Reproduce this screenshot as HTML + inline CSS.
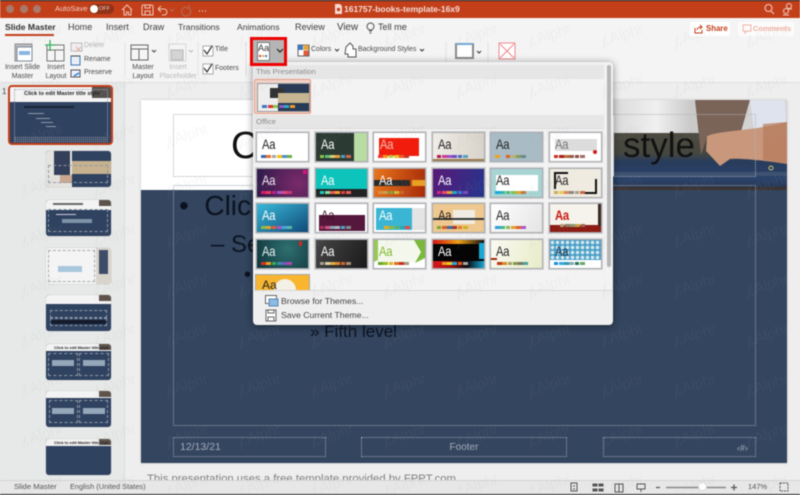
<!DOCTYPE html>
<html><head><meta charset="utf-8"><style>
html,body{margin:0;padding:0;width:800px;height:495px;overflow:hidden;background:#eee}
#r{position:relative;width:800px;height:495px;overflow:hidden;font-family:"Liberation Sans",sans-serif;filter:blur(.45px);background:#ebebeb}
#r div,#r span.a{position:absolute}
.tx{position:absolute;white-space:nowrap;color:#4a4a4a;font-size:7px;line-height:10px}
.c{text-align:center;white-space:normal}
.tab{position:absolute;top:21px;font-size:9.100px;line-height:13px;color:#3c3c3c;white-space:nowrap}
.th{position:absolute;width:51px;height:28px;border:1px solid #a4a8ad;box-shadow:0 0 0 1px #d6d6d6;overflow:hidden}
.th b{position:absolute;left:5px;top:3px;font:400 14px/16px "Liberation Sans",sans-serif;color:#222;transform:scaleX(.8);transform-origin:left top;letter-spacing:-.2px}
.th p{position:absolute;left:4px;top:22px;margin:0;height:3px;display:flex;gap:.5px}
.th p i{display:block;width:4.800px;height:3px}
.th div{position:absolute}
.st{position:absolute;left:46px;width:65px;height:36px;background:#2f4260;border-radius:3px;overflow:hidden;box-shadow:0 0 1px #999}
.st .w{left:0;top:0;width:100%;height:10px;background:#f3f3f3}
.st .p{right:0;top:0;width:12px;height:6px;background:#5d534c}
.st .l{border:1px dashed #8f98a6;box-sizing:border-box}
.dash{position:absolute;border:1px dotted #9da4af;box-sizing:border-box}
</style></head><body><div id="r">

<!-- title bar -->
<div style="left:0;top:0;width:800px;height:1px;background:#111"></div>
<div style="left:0;top:1px;width:800px;height:17px;background:#c33f1a"></div>
<div style="left:6px;top:5px;width:8px;height:8px;border-radius:50%;background:#a9796a"></div>
<div style="left:20px;top:5px;width:8px;height:8px;border-radius:50%;background:#a9796a"></div>
<div style="left:33px;top:5px;width:8px;height:8px;border-radius:50%;background:#a9796a"></div>
<span class="tx" style="left:55px;top:4px;font-size:7.500px;color:#f0cfc5">AutoSave</span>
<div style="left:89px;top:4px;width:25px;height:10px;border-radius:5px;background:#8e3218"></div>
<div style="left:90px;top:5px;width:8px;height:8px;border-radius:50%;background:#fff"></div>
<span class="tx" style="left:99px;top:5px;font-size:5.500px;line-height:8px;color:#eeccc2">OFF</span>
<svg style="position:absolute;left:120px;top:2px" width="100" height="16" fill="none" stroke="#eec6ba" stroke-width="1">
<path d="M2 8l5-5 5 5M4 7v6h2.500v-3h2v3h2.500V7"/>
<path d="M23 3h9l1 1v9H22V4zM25 3v3h5V3M25 13V9h5v4"/>
<path d="M38 7h6a3 3 0 0 1 0 6h-2M38 7l3-3M38 7l3 3"/><path d="M50 7l2 2 2-2" stroke="#b36f5c"/>
<path d="M66 5a4.500 4.500 0 1 0 3 1M69 3v3h-3" stroke="#b36f5c"/>
<path d="M79 9h1M82 9h1M85 9h1" stroke="#eec6ba" stroke-width="1.400"/></svg>
<svg style="position:absolute;left:334px;top:3px" width="9" height="12"><path d="M1 1h5l2 2v8H1z" fill="#f3d9d1"/><path d="M3 5h3v3H3z" fill="#c33f1a"/></svg>
<span class="tx" style="left:344px;top:4px;font-size:8.500px;font-weight:700;color:#f3ded8">161757-books-template-16x9</span>
<svg style="position:absolute;left:763px;top:2px" width="32" height="15" fill="none" stroke="#eec6ba" stroke-width="1.100"><circle cx="5.500" cy="6" r="3.500"/><path d="M8 9l3 3"/><circle cx="26" cy="4" r="2.500"/><circle cx="23" cy="9" r="2.500"/><path d="M20 13h6M25 7h4"/></svg>

<!-- tabs -->
<div style="left:0;top:18px;width:800px;height:64px;background:#f4f4f4"></div>
<span class="tab" style="left:5px;font-weight:700;font-size:8.600px;color:#333">Slide Master</span>
<div style="left:5px;top:34px;width:49px;height:1.500px;background:#c33f1a"></div>
<span class="tab" style="left:68px">Home</span>
<span class="tab" style="left:106px">Insert</span>
<span class="tab" style="left:143px">Draw</span>
<span class="tab" style="left:178px;font-size:8.600px">Transitions</span>
<span class="tab" style="left:237px;font-size:8.600px">Animations</span>
<span class="tab" style="left:295px">Review</span>
<span class="tab" style="left:337px;font-size:9.800px">View</span>
<svg style="position:absolute;left:366px;top:22px" width="9" height="12" fill="none" stroke="#555"><circle cx="4.500" cy="4.500" r="3.500"/><path d="M3 9h3M3.500 11h2"/></svg>
<span class="tab" style="left:378px">Tell me</span>

<div style="left:690px;top:22px;width:40px;height:14px;background:#fff;border-radius:2px"></div>
<svg style="position:absolute;left:694px;top:24px" width="10" height="10" fill="none" stroke="#c33f1a"><path d="M1 4v5h7V6M3 6c0-2 2-3 4-3M6 1l2 2-2 2"/></svg>
<span class="tx" style="left:706px;top:24px;font-size:7.800px;font-weight:700;color:#c33f1a">Share</span>
<div style="left:738px;top:22px;width:56px;height:14px;background:#fbfbfb;border-radius:2px"></div>
<svg style="position:absolute;left:742px;top:24px" width="10" height="10" fill="none" stroke="#efb4a3"><path d="M1 1h8v6H5L3 9V7H1z"/></svg>
<span class="tx" style="left:753px;top:24px;font-size:7.400px;font-weight:700;color:#eeb09f">Comments</span>

<!-- ribbon icons -->
<svg style="position:absolute;left:0;top:38px" width="800" height="44" fill="none">
<rect x="15" y="6" width="17" height="17" fill="#bdbdbd" stroke="#8f8f8f"/><rect x="17" y="9" width="15" height="14" fill="#fff" stroke="#7a8a9a"/><rect x="19" y="13" width="11" height="4" fill="#88b6e0"/>
<rect x="47" y="7" width="17" height="16" fill="#f5f5f5" stroke="#777"/><path d="M47 12h17M55 12v11" stroke="#777"/><path d="M50 2v11M45 7h11" stroke="#35b05c" stroke-width="1.300"/>
<rect x="71" y="5" width="11" height="8" stroke="#bbb" fill="#eee"/><path d="M76 9l5 5M81 9l-5 5" stroke="#e8b0a4"/>
<rect x="71" y="18" width="9" height="9" stroke="#3c78b4" fill="#e8eef5"/><path d="M71 18h9" stroke="#444"/>
<rect x="71" y="32" width="9" height="7" stroke="#555" fill="#eef"/><path d="M74 38l5-3" stroke="#2a7fd0" stroke-width="1.500"/>
<rect x="131" y="7" width="17" height="15" fill="#f5f5f5" stroke="#666"/><path d="M131 11h17M139 11v11" stroke="#666"/><path d="M152 12l2 2 2-2" stroke="#444"/>
<rect x="169" y="6" width="17" height="17" stroke="#bbb" stroke-dasharray="1 1"/><rect x="171" y="12" width="12" height="10" fill="#d4d4d4" stroke="#b5b5b5"/><path d="M189 12l2 2 2-2" stroke="#bbb"/>
<rect x="203" y="8" width="10" height="10" fill="#fff" stroke="#aaa"/><path d="M204 12l3 4 5-8" stroke="#333" stroke-width="1.200"/>
<rect x="203" y="26" width="10" height="10" fill="#fff" stroke="#aaa"/><path d="M204 30l3 4 5-8" stroke="#333" stroke-width="1.200"/>
<path d="M246 4v34" stroke="#dcdcdc"/><path d="M125 4v34M198 4v34M446 4v24M488 4v24" stroke="#e1e1e1"/>
<rect x="298" y="7" width="11" height="11" fill="#fff" stroke="#666"/><rect x="298" y="7" width="5" height="5" fill="#3a78c4"/><rect x="303.500" y="7" width="5" height="5" fill="#e8a33c"/><rect x="303.500" y="12.500" width="5" height="5" fill="#e15a3a"/>
<path d="M335 11l2 2 2-2M420 11l2 2 2-2M477 13l2 2 2-2" stroke="#333"/>
<path d="M346 9l4-4 3 3v3h3v8h-8v-3h-3z" stroke="#555" fill="#fff"/>
<rect x="456" y="6" width="17" height="14" fill="#fff" stroke="#8a8a8a" stroke-width="2"/><path d="M456 6h17" stroke="#6fb0e5" stroke-width="1.500"/>
<rect x="499" y="5" width="16" height="16" fill="#fff" stroke="#ec8b8f"/><path d="M500 6l14 14M514 6l-14 14" stroke="#ec8b8f"/>
</svg>
<span class="tx c" style="left:2px;top:64px;width:41px;height:20px;line-height:8.500px">Insert Slide<br>Master</span>
<span class="tx c" style="left:44px;top:64px;width:24px;line-height:8.500px">Insert<br>Layout</span>
<span class="tx" style="left:84px;top:41px;color:#b4b4b4">Delete</span>
<span class="tx" style="left:84px;top:55px">Rename</span>
<span class="tx" style="left:84px;top:68px">Preserve</span>
<span class="tx c" style="left:128px;top:64px;width:30px;line-height:8.500px">Master<br>Layout</span>
<span class="tx c" style="left:158px;top:64px;width:40px;line-height:8.500px;color:#b8b8b8">Insert<br>Placeholder</span>
<span class="tx" style="left:215px;top:45px">Title</span>
<span class="tx" style="left:215px;top:64px">Footers</span>
<span class="tx" style="left:311px;top:45px">Colors</span>
<span class="tx" style="left:358px;top:45px">Background Styles</span>

<!-- left panel -->
<div style="left:0;top:82px;width:124px;height:398px;background:#e7e9e8;border-top:1px solid #ddd"></div>
<div style="left:124px;top:82px;width:676px;height:398px;background:#eeeeee;border-top:1px solid #dedede;border-left:1px solid #dcdcdc"></div>
<span class="tx" style="left:2px;top:87px;font-size:8px;color:#444">1</span>
<div style="left:8px;top:85px;width:105px;height:60px;border:2px solid #c33f1a;border-radius:4px;box-sizing:border-box;background:#2f4260;overflow:hidden">
  <div style="left:0;top:0;width:100%;height:15px;background:#f4f4f4"></div>
  <div style="left:82px;top:0;width:19px;height:11px;background:#55504e"></div>
  <span class="tx c" style="left:4px;top:4px;width:96px;font-size:5.500px;line-height:7px;font-weight:700;color:#222">Click to edit Master title style</span>
  <div class="dash" style="left:4px;top:2px;width:94px;height:51px"></div>
  <div style="left:14px;top:19px;width:50px;height:1.500px;background:#1a2436"></div>
  <div style="left:18px;top:26px;width:16px;height:1px;background:#8c99ab"></div>
  <div style="left:26px;top:31px;width:14px;height:1px;background:#8c99ab"></div>
  <div style="left:31px;top:35px;width:12px;height:1px;background:#8c99ab"></div>
  <div style="left:36px;top:39px;width:10px;height:1px;background:#8c99ab"></div>
  <div class="dash" style="left:4px;top:50px;width:94px;height:5px"></div>
</div>

<div class="st" style="top:151px;background:#2f4260"><div style="left:0;top:0;width:26px;height:36px;background:#e5e3de"></div><div style="left:8px;top:0;width:16px;height:24px;background:#34405a"></div><div style="left:14px;top:24px;width:12px;height:8px;background:#c9a88f"></div><div style="left:26px;top:10px;width:39px;height:13px;background:#c6b28e"></div><div class="l" style="left:2px;top:14px;width:60px;height:18px"></div></div>
<div class="st" style="top:200px"><div class="w"></div><div class="p"></div><div style="left:7px;top:3px;width:30px;height:2px;background:#666"></div><div class="l" style="left:2px;top:9px;width:60px;height:23px"></div><div style="left:10px;top:14px;width:20px;height:1px;background:#ccd"></div><div style="left:16px;top:19px;width:30px;height:4px;background:#7e93a8"></div></div>
<div class="st" style="top:248px;background:#f4f4f4"><div style="right:0;top:0;width:15px;height:36px;background:#d8d4cc"></div><div style="right:3px;top:2px;width:9px;height:24px;background:#3d4d68"></div><div class="l" style="left:2px;top:2px;width:47px;height:32px;border-color:#aaa"></div><div style="left:12px;top:18px;width:24px;height:6px;background:#a8c6dc"></div></div>
<div class="st" style="top:295px"><div class="w" style="height:9px"></div><div class="p"></div><div class="l" style="left:4px;top:15px;width:57px;height:8px"></div><div style="left:5px;top:25px;width:55px;height:4px;background:#141c2b"></div><div class="l" style="left:4px;top:23px;width:57px;height:8px"></div></div>
<div class="st" style="top:344px"><div class="w" style="height:7px"></div><div class="p"></div><div class="tx" style="left:8px;top:1px;font-size:4px;line-height:5px;color:#222;font-weight:700">Click to edit Master title style</div><div class="l" style="left:2px;top:9px;width:30px;height:23px"></div><div class="l" style="left:33px;top:9px;width:30px;height:23px"></div><div style="left:6px;top:16px;width:22px;height:6px;background:#94a8ba"></div><div style="left:37px;top:16px;width:22px;height:6px;background:#94a8ba"></div></div>
<div class="st" style="top:391px"><div class="w" style="height:7px"></div><div class="p"></div><div class="l" style="left:3px;top:9px;width:29px;height:23px"></div><div class="l" style="left:33px;top:9px;width:29px;height:23px"></div><div style="left:6px;top:17px;width:22px;height:6px;background:#94a8ba"></div><div style="left:37px;top:17px;width:22px;height:6px;background:#94a8ba"></div></div>
<div class="st" style="top:439px"><div class="w" style="height:7px"></div><div class="p"></div><div class="tx" style="left:8px;top:1px;font-size:4px;line-height:5px;color:#222;font-weight:700">Click to edit Master title style</div></div>

<!-- main slide -->
<div style="left:141px;top:100px;width:646px;height:363px;background:#fff;box-shadow:0 0 2px #bbb;overflow:hidden">
  <div style="left:0;top:90px;width:646px;height:273px;background:#33455f"></div>
  <!-- photo -->
  <div style="left:472px;top:0;width:174px;height:36px;background:linear-gradient(90deg,#d9d9d9,#f0f0f0 25%,#c9c9c9 45%,#d8d8d8)"></div>
  <div style="left:472px;top:33px;width:174px;height:57px;background:linear-gradient(180deg,#4c4a40 0,#46473f 35%,#283c5c 50%,#2b426a 80%,#26364e)"></div>
  <svg style="position:absolute;left:472px;top:0" width="174" height="90"><path d="M82 0h55l-9 32-33 3-7 20z" fill="#7a6357"/><path d="M128 32l9-32 36 0 1 24z" fill="#d2d2d2"/><path d="M137 0h35l1 22-32 8z" fill="#dfe3ee"/><path d="M94 36c15-6 40-4 80-14v42c-25-4-50-6-57-5l-10 7-14-15z" fill="#c9977c"/><path d="M150 24l24-2v42l-24-4z" fill="#b57a5a" opacity=".7"/><path d="M0 72h174v4H0z" fill="#4f5f78" opacity=".6"/><path d="M0 87h174v3H0z" fill="#3c3230"/><circle cx="158" cy="68" r="2" fill="none" stroke="#c9c477"/></svg>
  <div style="left:32px;top:14px;width:441px;height:63px;background:#fff"></div>
  <div class="dash" style="left:32px;top:14px;width:583px;height:63px;border-color:#aeb1b5"></div>
  <div class="dash" style="left:32px;top:85px;width:583px;height:241px"></div>
  <div class="dash" style="left:32px;top:337px;width:153px;height:20px"></div>
  <div class="dash" style="left:220px;top:337px;width:206px;height:20px"></div>
  <div class="dash" style="left:462px;top:337px;width:153px;height:20px"></div>
  <span class="tx" style="left:90px;top:24px;font-size:38px;line-height:44px;color:#111">C</span>
  <span class="tx" style="left:482px;top:24px;font-size:35px;line-height:44px;color:#111">style</span>
  <span class="tx" style="left:38px;top:89px;font-size:28px;line-height:34px;color:#0c1320">•&nbsp;&nbsp;Click</span>
  <span class="tx" style="left:70px;top:131px;font-size:24px;line-height:28px;color:#0c1320">– Se</span>
  <span class="tx" style="left:103px;top:163px;font-size:20px;line-height:24px;color:#0c1320">•</span>
  <span class="tx" style="left:169px;top:222px;font-size:17px;line-height:20px;color:#0c1320">» Fifth level</span>
  <span class="tx" style="left:39px;top:341px;font-size:10.500px;line-height:13px;color:#a5adb8">12/13/21</span>
  <span class="tx c" style="left:220px;top:341px;width:206px;font-size:10px;line-height:13px;color:#a5adb8">Footer</span>
  <span class="tx" style="left:596px;top:342px;font-size:9px;line-height:12px;color:#a5adb8">‹#›</span>
</div>
<span class="tx" style="left:147px;top:472px;font-size:11.300px;line-height:14px;color:#808080">This presentation uses a free template provided by FPPT.com</span>

<!-- status bar -->
<div style="left:0;top:480px;width:800px;height:14px;background:#e7e7e7;border-top:1px solid #d4d4d4;box-sizing:border-box"></div>
<div style="left:0;top:494px;width:800px;height:1px;background:#222"></div>
<span class="tx" style="left:14px;top:482px;font-size:7.700px;color:#555">Slide Master</span>
<span class="tx" style="left:70px;top:482px;font-size:7.400px;color:#555">English (United States)</span>
<svg style="position:absolute;left:568px;top:481px" width="226" height="13" fill="none" stroke="#555"><rect x="3" y="2" width="6" height="8"/><path d="M5 5h2M5 8h2"/><path d="M25 3h4v2h-4zM31 3h4v2h-4zM25 8h4v2h-4zM31 8h4v2h-4z" fill="#555"/><path d="M47 3h4v8h-4zM51 3h4v8h-4z"/><path d="M69 3h8v5h-8zM73 8v3"/><path d="M88 6.500h4M163 6.500h6M166 3.500v6" stroke-width="1.200"/><path d="M98 6.500h60" stroke="#8a8a8a" stroke-width="1.500"/><rect x="212" y="2" width="8" height="8" stroke-dasharray="2 1"/></svg>
<div style="left:698px;top:482px;width:9px;height:9px;border-radius:50%;background:#fff;border:1px solid #ddd;box-sizing:border-box"></div>
<span class="tx" style="left:748px;top:482px;font-size:7.500px;color:#555">147%</span>

<!-- popup -->
<div style="left:253px;top:62px;width:360px;height:263px;background:#f1f1f1;border-radius:4px;box-shadow:0 1px 8px rgba(0,0,0,.45)"></div>
<div style="left:254px;top:65px;width:350px;height:14px;background:#e6e6e6;border-bottom:1px solid #dcdcdc"></div>
<span class="tx" style="left:256px;top:67px;font-size:7.700px;color:#8a8a8a">This Presentation</span>
<div style="left:254px;top:79px;width:350px;height:36px;background:#f3f3f3"></div>
<div style="left:254px;top:79px;width:57px;height:35px;background:#f2d3c8;border:1px solid #e79b84;border-radius:2px;box-sizing:border-box"></div>
<div style="left:257px;top:83px;width:51px;height:27px;background:#283a55;border:1px solid #999;overflow:hidden">
 <div style="left:0;top:0;width:20px;height:27px;background:#eeeeee"></div><div style="left:12px;top:4px;width:14px;height:10px;background:#333"></div>
 <div style="left:20px;top:9px;width:31px;height:10px;background:#c7b491"></div>
 <div style="left:4px;top:21px;width:4.500px;height:3px;background:#3a78c4"></div><div style="left:10px;top:21px;width:4.500px;height:3px;background:#d33"></div><div style="left:15px;top:21px;width:4.500px;height:3px;background:#8bc34a"></div><div style="left:21px;top:21px;width:4.500px;height:3px;background:#8a5cc4"></div><div style="left:26px;top:21px;width:4.500px;height:3px;background:#33a8c9"></div><div style="left:32px;top:21px;width:4.500px;height:3px;background:#ef9a2e"></div>
</div>
<div style="left:254px;top:115px;width:350px;height:13px;background:#e6e6e6;border-bottom:1px solid #dcdcdc"></div>
<span class="tx" style="left:256px;top:117px;font-size:7.700px;color:#8a8a8a">Office</span>
<div style="left:254px;top:129px;width:350px;height:161px;background:#f3f3f3"></div>

<!-- row 1 -->
<div class="th" style="left:256px;top:132px;background:#fff"><b>Aa</b><p><i style="background:#3a66b0"></i><i style="background:#e8742c"></i><i style="background:#a5a5a5"></i><i style="background:#f5c018"></i><i style="background:#4f8fd0"></i><i style="background:#6fae45"></i></p></div>
<div class="th" style="left:314.500px;top:132px;background:#2c3a34"><div style="right:0;top:0;width:13px;height:28px;background:#b8dca2"></div><b style="color:#fff">Aa</b><p><i style="background:#8bc34a"></i><i style="background:#5fbf7f"></i><i style="background:#d8d070"></i><i style="background:#e8a040"></i><i style="background:#50a0c0"></i><i style="background:#d06a50"></i></p></div>
<div class="th" style="left:373px;top:132px;background:#fff"><div style="left:5px;top:5px;width:40px;height:18px;background:#f21c0c"></div><b style="color:#f6c0b0;left:6px">Aa</b><p><i style="background:#e33"></i><i style="background:#f7941d"></i><i style="background:#b6c838"></i><i style="background:#e8c020"></i><i style="background:#f05a28"></i><i style="background:#c4332c"></i></p></div>
<div class="th" style="left:431.500px;top:132px;background:linear-gradient(90deg,#efece6,#d8d3ca)"><div style="left:0;bottom:0;width:51px;height:2px;background:#9a7a4a"></div><b>Aa</b><p><i style="background:#b3174f"></i><i style="background:#c83c90"></i><i style="background:#a050c8"></i><i style="background:#6a4cc0"></i><i style="background:#4a6ac0"></i><i style="background:#5aa0b8"></i></p></div>
<div class="th" style="left:490px;top:132px;background:#a9bcc6"><b>Aa</b><p><i style="background:#f0a01e"></i><i style="background:#a9bcc6"></i><i style="background:#e0601c"></i><i style="background:#b8b078"></i><i style="background:#8a9a5a"></i><i style="background:#6a8a8a"></i></p></div>
<div class="th" style="left:548.500px;top:132px;background:#fff"><div style="left:5px;top:6px;width:42px;height:12px;background:#dcdcdc"></div><div style="right:4px;top:17px;width:4px;height:4px;border-radius:50%;background:#c82010"></div><b style="color:#777">Aa</b><p><i style="background:#c83218"></i><i style="background:#a82018"></i><i style="background:#b86a38"></i><i style="background:#985a48"></i><i style="background:#885048"></i><i style="background:#a86868"></i></p></div>
<!-- row 2 -->
<div class="th" style="left:256px;top:168px;background:radial-gradient(circle at 80% 50%,#7a2a6a,#2e1a4a)"><div style="right:1px;top:1px;width:4px;height:4px;background:#d0187a"></div><b style="color:#f5e8f5">Aa</b><p><i style="background:#d81870"></i><i style="background:#e83a5a"></i><i style="background:#c0208a"></i><i style="background:#a058c8"></i><i style="background:#e04880"></i><i style="background:#c83878"></i></p></div>
<div class="th" style="left:314.500px;top:168px;background:#0cc4bc"><div style="left:0;bottom:0;width:51px;height:8px;background:#222"></div><b style="color:#fff">Aa</b><p><i style="background:#18d0c0"></i><i style="background:#7fe0a0"></i><i style="background:#f05a5a"></i><i style="background:#f0a030"></i><i style="background:#e04040"></i><i style="background:#e86060"></i></p></div>
<div class="th" style="left:373px;top:168px;background:linear-gradient(100deg,#e8761c,#a82a08)"><div style="left:0;top:11px;width:36px;height:6px;background:#2a2a2a"></div><div style="right:0;top:11px;width:13px;height:6px;background:#eba020"></div><b style="color:#fff">Aa</b><p><i style="background:#d89040"></i><i style="background:#c8a050"></i><i style="background:#78a848"></i><i style="background:#d8b838"></i><i style="background:#c86828"></i><i style="background:#b84828"></i></p></div>
<div class="th" style="left:431.500px;top:168px;background:linear-gradient(110deg,#5a1a78,#24348c)"><b style="color:#fff">Aa</b><p><i style="background:#d82878"></i><i style="background:#f04870"></i><i style="background:#e8a030"></i><i style="background:#28a8c8"></i><i style="background:#3878d0"></i><i style="background:#7848c0"></i></p></div>
<div class="th" style="left:490px;top:168px;background:#a8d4d4"><div style="left:5px;top:6px;width:42px;height:16px;background:#fff"></div><b>Aa</b><p><i style="background:#18a8e0"></i><i style="background:#30b8a0"></i><i style="background:#50b878"></i><i style="background:#80c050"></i><i style="background:#d8a830"></i><i style="background:#c07840"></i></p></div>
<div class="th" style="left:548.500px;top:168px;background:#efebe0"><div style="left:4px;top:3px;width:2px;height:17px;background:#111"></div><div style="left:4px;top:3px;width:14px;height:2px;background:#111"></div><div style="right:4px;top:10px;width:2px;height:15px;background:#111"></div><div style="right:4px;top:23px;width:16px;height:2px;background:#111"></div><b>Aa</b><p><i style="background:#c8b058"></i><i style="background:#e8c860"></i><i style="background:#d88858"></i><i style="background:#888"></i><i style="background:#a8a088"></i><i style="background:#c86848"></i></p></div>
<!-- row 3 -->
<div class="th" style="left:256px;top:203px;background:linear-gradient(150deg,#3ab8d8,#104a78)"><b style="color:#fff">Aa</b><p><i style="background:#88c048"></i><i style="background:#e8a030"></i><i style="background:#e85a30"></i><i style="background:#a858c8"></i><i style="background:#48a8d8"></i><i style="background:#58b8a8"></i></p></div>
<div class="th" style="left:314.500px;top:203px;background:#fff"><div style="left:3px;top:11px;width:46px;height:16px;background:#55183c"></div><b style="color:#42142c">Aa</b><p><i style="background:#b03060"></i><i style="background:#d05888"></i><i style="background:#8aa8b8"></i><i style="background:#b0b8c0"></i><i style="background:#48a8c8"></i><i style="background:#888"></i></p></div>
<div class="th" style="left:373px;top:203px;background:#fff"><div style="left:2px;top:4px;width:36px;height:22px;background:#3ab6d4"></div><div style="right:0;top:4px;width:13px;height:22px;background:#e4e4e4"></div><b style="color:#fff">Aa</b><p style="left:10px"><i style="background:#f0a820"></i><i style="background:#88b848"></i><i style="background:#60b060"></i><i style="background:#28a8a8"></i><i style="background:#e84848"></i></p></div>
<div class="th" style="left:431.500px;top:203px;background:#eec88e"><div style="left:20px;top:6px;width:22px;height:14px;background:#f0ece4"></div><div style="left:0;top:14px;width:51px;height:1.500px;background:#333"></div><b>Aa</b><p><i style="background:#78a838"></i><i style="background:#e05a20"></i><i style="background:#386ab0"></i><i style="background:#a03830"></i><i style="background:#e08020"></i><i style="background:#d0b028"></i></p></div>
<div class="th" style="left:490px;top:203px;background:linear-gradient(120deg,#fff,#e4e4e4)"><b>Aa</b><p><i style="background:#30a0e0"></i><i style="background:#40b890"></i><i style="background:#90b850"></i><i style="background:#e0a030"></i><i style="background:#e06030"></i><i style="background:#a858c8"></i></p></div>
<div class="th" style="left:548.500px;top:203px;background:#f6f2ec"><div style="left:0;bottom:0;width:51px;height:7px;background:#8c1c14"></div><div style="right:0;top:0;width:3px;height:22px;background:#3c2a20"></div><b style="color:#c81a10;font-weight:700">Aa</b><p style="top:20px;left:10px"><i style="background:#b8a078"></i><i style="background:#908060"></i><i style="background:#889878"></i><i style="background:#c8a048"></i><i style="background:#a06850"></i></p></div>
<!-- row 4 -->
<div class="th" style="left:256px;top:239px;background:radial-gradient(circle at 60% 30%,#2e7070,#10343c)"><div style="right:6px;top:1px;width:3px;height:5px;background:#d02828"></div><b style="color:#e8f0f0">Aa</b><p><i style="background:#d83020"></i><i style="background:#e8a020"></i><i style="background:#40a860"></i><i style="background:#3890a8"></i><i style="background:#7858c0"></i><i style="background:#b048a8"></i></p></div>
<div class="th" style="left:314.500px;top:239px;background:linear-gradient(120deg,#454545,#1a1a1a)"><b style="color:#fff">Aa</b><p><i style="background:#a8a088"></i><i style="background:#d8d0b0"></i><i style="background:#e0b040"></i><i style="background:#e08830"></i><i style="background:#d86030"></i><i style="background:#a89070"></i></p></div>
<div class="th" style="left:373px;top:239px;background:#fff"><svg style="position:absolute;left:0;top:0" width="51" height="28"><path d="M3 0h38l6 12-6 10H3z" fill="#f4f8ec"/><path d="M40 0h11v18l-10 5 6-11z" fill="#7cb83c"/><path d="M0 0h4v20l-4 2z" fill="#98c858"/></svg><b style="color:#80b830">Aa</b><p><i style="background:#68a828"></i><i style="background:#98b828"></i><i style="background:#e8b020"></i><i style="background:#d87020"></i><i style="background:#c83020"></i><i style="background:#a89880"></i></p></div>
<div class="th" style="left:431.500px;top:239px;background:#050505"><div style="left:0;top:0;width:51px;height:4px;background:linear-gradient(90deg,#d81010,#f0a010,#101010)"></div><div style="right:0;top:3px;width:5px;height:16px;background:#18a8d8"></div><div style="left:0;bottom:0;width:51px;height:7px;background:linear-gradient(90deg,#d81818,#a01010,#080808,#18a8d8)"></div><b style="color:#fff">Aa</b><p><i style="background:#d81818"></i><i style="background:#f0a020"></i><i style="background:#e8d020"></i><i style="background:#28a8d8"></i><i style="background:#e06020"></i><i style="background:#a8a8a8"></i></p></div>
<div class="th" style="left:490px;top:239px;background:linear-gradient(110deg,#fafaf2,#e8ecc8)"><div style="left:0;top:18px;width:6px;height:2px;background:#a82810"></div><b>Aa</b><p style="left:6px"><i style="background:#b83818"></i><i style="background:#d88828"></i><i style="background:#a8a068"></i><i style="background:#889848"></i><i style="background:#787868"></i><i style="background:#50a098"></i></p></div>
<div class="th" style="left:548.500px;top:239px;background:#fff"><div style="left:0;top:0;width:51px;height:20px;background:radial-gradient(circle,#d8e8f0 1.500px,#4aa0c8 2px) 0 0/5px 5px"></div><b style="color:#15304a">Aa</b><p><i style="background:#1890d8"></i><i style="background:#38a8e0"></i><i style="background:#3098b0"></i><i style="background:#88a8b8"></i><i style="background:#287858"></i><i style="background:#68a868"></i></p></div>
<!-- row 5 clipped -->
<div style="left:256px;top:275px;width:53px;height:15px;overflow:hidden;background:#f9b52e;box-shadow:0 0 0 1px #a4a8ad"><div style="left:18px;top:4px;width:22px;height:22px;border-radius:50%;background:#f5f0e5"></div><span class="tx" style="left:6px;top:3px;font-size:12px;line-height:14px;color:#222">Aa</span></div>

<!-- scrollbar -->
<div style="left:605px;top:65px;width:8px;height:225px;background:#f3f3f3"></div>
<div style="left:607px;top:65px;width:4px;height:202px;background:#b5b5b5;border-radius:2px"></div>
<!-- footer -->
<div style="left:254px;top:290px;width:358px;height:34px;background:#efefef;border-top:1px solid #d8d8d8;box-sizing:border-box"></div>
<svg style="position:absolute;left:265px;top:295px" width="14" height="29" fill="none" stroke="#666"><rect x=".5" y=".5" width="11" height="8" fill="#fff"/><rect x="4" y="4" width="9" height="7" fill="#8dbbe4" stroke="#5b84ad"/><rect x="1" y="15" width="10" height="11" fill="#fff"/><path d="M3 15v3h6v-3M3 26v-4h6v4"/></svg>
<span class="tx" style="left:281px;top:296px;font-size:8.700px;line-height:11px;color:#444">Browse for Themes...</span>
<span class="tx" style="left:281px;top:310px;font-size:8.700px;line-height:11px;color:#444">Save Current Theme...</span>

<!-- red highlight -->
<div style="left:250px;top:37px;width:37px;height:29px;border:3px solid #ef0000;box-sizing:border-box;background:#b5b5b5"></div>
<div style="left:257px;top:42px;width:13px;height:19px;background:#fff;border:1px solid #777;box-sizing:border-box"></div>
<span class="tx" style="left:258px;top:43px;font-size:9px;line-height:10px;color:#333">Aa</span>
<div style="left:259px;top:55px;width:2px;height:2px;background:#d33"></div><div style="left:262px;top:55px;width:2px;height:2px;background:#e8a030"></div><div style="left:265px;top:55px;width:2px;height:2px;background:#3a78c4"></div>
<svg style="position:absolute;left:276px;top:48px" width="8" height="6" fill="none" stroke="#222" stroke-width="1.200"><path d="M1 1l3 3 3-3"/></svg>

<!-- watermark -->
<svg style="position:absolute;left:0;top:0;pointer-events:none" width="800" height="495">
<defs><pattern id="wm" x="12" y="12" width="72.500" height="50" patternUnits="userSpaceOnUse">
<g transform="rotate(-18 20 25)"><path d="M8 34l6-13M13 32l2-3" stroke="#9a9a9a" stroke-width="2.500" fill="none" opacity=".7"/><text x="17" y="31" font-family="Liberation Sans" font-size="15" fill="#9a9a9a">Alphr</text></g>
</pattern></defs>
<rect width="800" height="495" fill="url(#wm)" opacity=".08"/></svg>
</div></body></html>
